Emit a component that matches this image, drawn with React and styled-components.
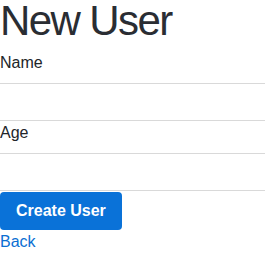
import styled, { createGlobalStyle } from "styled-components";

const GlobalStyle = createGlobalStyle`
    html, body {
        margin: 0;
        padding: 0;
        background: #ffffff;
        overflow: hidden;
    }
    body {
        font-family: "Liberation Sans", Arial, sans-serif;
        font-size: 16px;
        line-height: 1.5;
        color: #212529;
    }
`;

const Page = styled.div`
    display: flex;
    flex-direction: column;
    width: 265px;
`;

const Title = styled.h1`
    margin: -3px 0 6px 0;
    font-size: 42px;
    line-height: 48px;
    font-weight: 400;
    letter-spacing: -1.6px;
    color: #2a2d33;
`;

const Form = styled.form`
    display: flex;
    flex-direction: column;
    align-items: flex-start;
`;

const Label = styled.label`
    display: block;
    margin-bottom: 8px;
    font-size: 16px;
    line-height: 24px;
    color: #212529;
`;

const Field = styled.input`
    display: block;
    box-sizing: border-box;
    /* the inputs run past both edges of the view */
    width: calc(100% + 4px);
    margin: 0 -2px;
    height: 38px;
    padding: 6px 12px;
    border: 1px solid #d9d9d9;
    border-radius: 0;
    font-family: inherit;
    font-size: 16px;
    background: #fff;
    outline: none;
`;

const Button = styled.button`
    height: 38px;
    margin-top: 1px;
    padding: 0 16px;
    border: none;
    border-radius: 4px;
    background-color: #0a72d8;
    color: #fff;
    font-family: inherit;
    font-size: 16px;
    font-weight: 600;
    cursor: pointer;
`;

const BackLink = styled.a`
    font-size: 16px;
    line-height: 24px;
    color: #0b6fd2;
    text-decoration: none;
`;

const App = () => {
    return (
        <Page>
            <GlobalStyle />
            <Title>New User</Title>
            <Form onSubmit={(e) => e.preventDefault()}>
                <Label htmlFor="name">Name</Label>
                <Field id="name" type="text" />
                <Label htmlFor="age">Age</Label>
                <Field id="age" type="number" />
                <Button type="submit">Create User</Button>
            </Form>
            <BackLink href="#">Back</BackLink>
        </Page>
    );
};

export default App;
